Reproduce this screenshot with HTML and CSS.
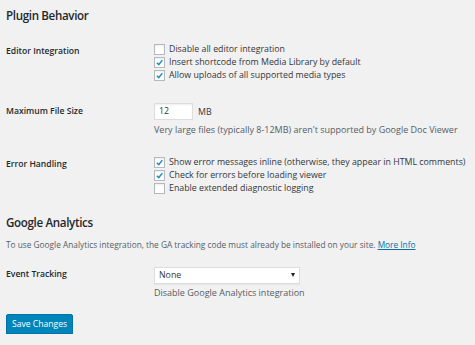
FILE: index.html
```html
<!DOCTYPE html>
<html>
<head>
<meta charset="utf-8">
<link rel="stylesheet" href="styles.css">
</head>
<body>
<div class="wrap">
  <h2 class="title">Plugin Behavior</h2>

  <div class="row row-editor">
    <div class="th">Editor Integration</div>
    <div class="td">
      <label class="cb"><span class="box"></span>Disable all editor integration</label>
      <label class="cb"><span class="box checked"><svg viewBox="0 0 10 10"><path d="M2 5.2 L4.2 7.3 L8.2 2.4"/></svg></span>Insert shortcode from Media Library by default</label>
      <label class="cb"><span class="box checked"><svg viewBox="0 0 10 10"><path d="M2 5.2 L4.2 7.3 L8.2 2.4"/></svg></span>Allow uploads of all supported media types</label>
    </div>
  </div>

  <div class="row row-size">
    <div class="th th-input">Maximum File Size</div>
    <div class="td">
      <div class="inline"><span class="input">12</span><span class="unit">MB</span></div>
      <p class="desc">Very large files (typically 8-12MB) aren't supported by Google Doc Viewer</p>
    </div>
  </div>

  <div class="row row-error">
    <div class="th">Error Handling</div>
    <div class="td">
      <label class="cb"><span class="box checked"><svg viewBox="0 0 10 10"><path d="M2 5.2 L4.2 7.3 L8.2 2.4"/></svg></span>Show error messages inline (otherwise, they appear in HTML comments)</label>
      <label class="cb"><span class="box checked"><svg viewBox="0 0 10 10"><path d="M2 5.2 L4.2 7.3 L8.2 2.4"/></svg></span>Check for errors before loading viewer</label>
      <label class="cb"><span class="box"></span>Enable extended diagnostic logging</label>
    </div>
  </div>

  <h2 class="title title-ga">Google Analytics</h2>
  <p class="intro">To use Google Analytics integration, the GA tracking code must already be installed on your site. <a href="#">More Info</a></p>

  <div class="row row-event">
    <div class="th th-input">Event Tracking</div>
    <div class="td">
      <div class="select"><span>None</span><span class="arrow"></span></div>
      <p class="desc">Disable Google Analytics integration</p>
    </div>
  </div>

  <button class="btn">Save Changes</button>
</div>
</body>
</html>
```
FILE: styles.css
```css
html, body {
  margin: 0;
  padding: 0;
  background: #f1f1f1;
}
body {
  font-family: "Open Sans", "Noto Sans", sans-serif;
  font-size: 8.8px;
  color: #32373c;
}
.wrap {
  padding: 0 6px;
}
.title {
  margin: 8px 0 0;
  font-size: 11.6px;
  line-height: 15px;
  font-weight: 600;
  letter-spacing: -0.35px;
  color: #23282d;
}
.row {
  display: grid;
  grid-template-columns: 148px 1fr;
}
.th {
  font-weight: 600;
  font-size: 8.6px;
  color: #23282d;
  line-height: 13px;
  padding-top: 2px;
}
.th-input {
  padding-top: 1.5px;
}
.td {
  display: flex;
  flex-direction: column;
}
.row-editor { margin-top: 20px; }
.row-size { margin-top: 21px; }
.row-error { margin-top: 20px; }
.row-event { margin-top: 16px; }
.cb {
  display: flex;
  align-items: center;
  line-height: 13px;
  height: 13px;
}
.box {
  width: 9px;
  height: 9px;
  border: 1px solid #b4b9be;
  background: #fff;
  margin-right: 4px;
  box-shadow: inset 0 1px 2px rgba(0,0,0,0.07);
  flex: none;
  display: flex;
}
.box svg {
  width: 9px;
  height: 9px;
}
.box path {
  fill: none;
  stroke: #1e8cbe;
  stroke-width: 1.6;
}
.inline {
  display: flex;
  align-items: center;
}
.input {
  box-sizing: border-box;
  width: 39px;
  height: 17px;
  background: #fff;
  border: 1px solid #ddd;
  box-shadow: inset 0 1px 2px rgba(0,0,0,0.07);
  color: #32373c;
  line-height: 15px;
  padding-left: 4px;
}
.unit {
  margin-left: 5px;
}
.desc {
  margin: 2.5px 0 0;
  line-height: 13px;
  font-size: 9px;
  color: #555d66;
}
.title-ga {
  margin-top: 20px;
}
.intro {
  margin: 8px 0 0;
  line-height: 13px;
  font-size: 8.3px;
  color: #555d66;
}
.intro a {
  color: #0073aa;
}
.select {
  box-sizing: border-box;
  width: 146px;
  height: 17px;
  background: #fff;
  border: 1px solid #ddd;
  box-shadow: 0 1px 1px rgba(0,0,0,0.04);
  display: flex;
  align-items: center;
  justify-content: space-between;
  padding: 0 4px;
  color: #32373c;
}
.arrow {
  width: 0;
  height: 0;
  border-left: 2.5px solid transparent;
  border-right: 2.5px solid transparent;
  border-top: 4px solid #222;
}
.btn {
  display: block;
  margin-top: 15px;
  box-sizing: border-box;
  width: 67px;
  height: 20px;
  background: #0085ba;
  border: 1px solid #0073aa;
  border-radius: 2px;
  box-shadow: 0 1px 0 #006799;
  color: #fff;
  font-family: inherit;
  font-size: 8.6px;
  padding: 0;
}
```
